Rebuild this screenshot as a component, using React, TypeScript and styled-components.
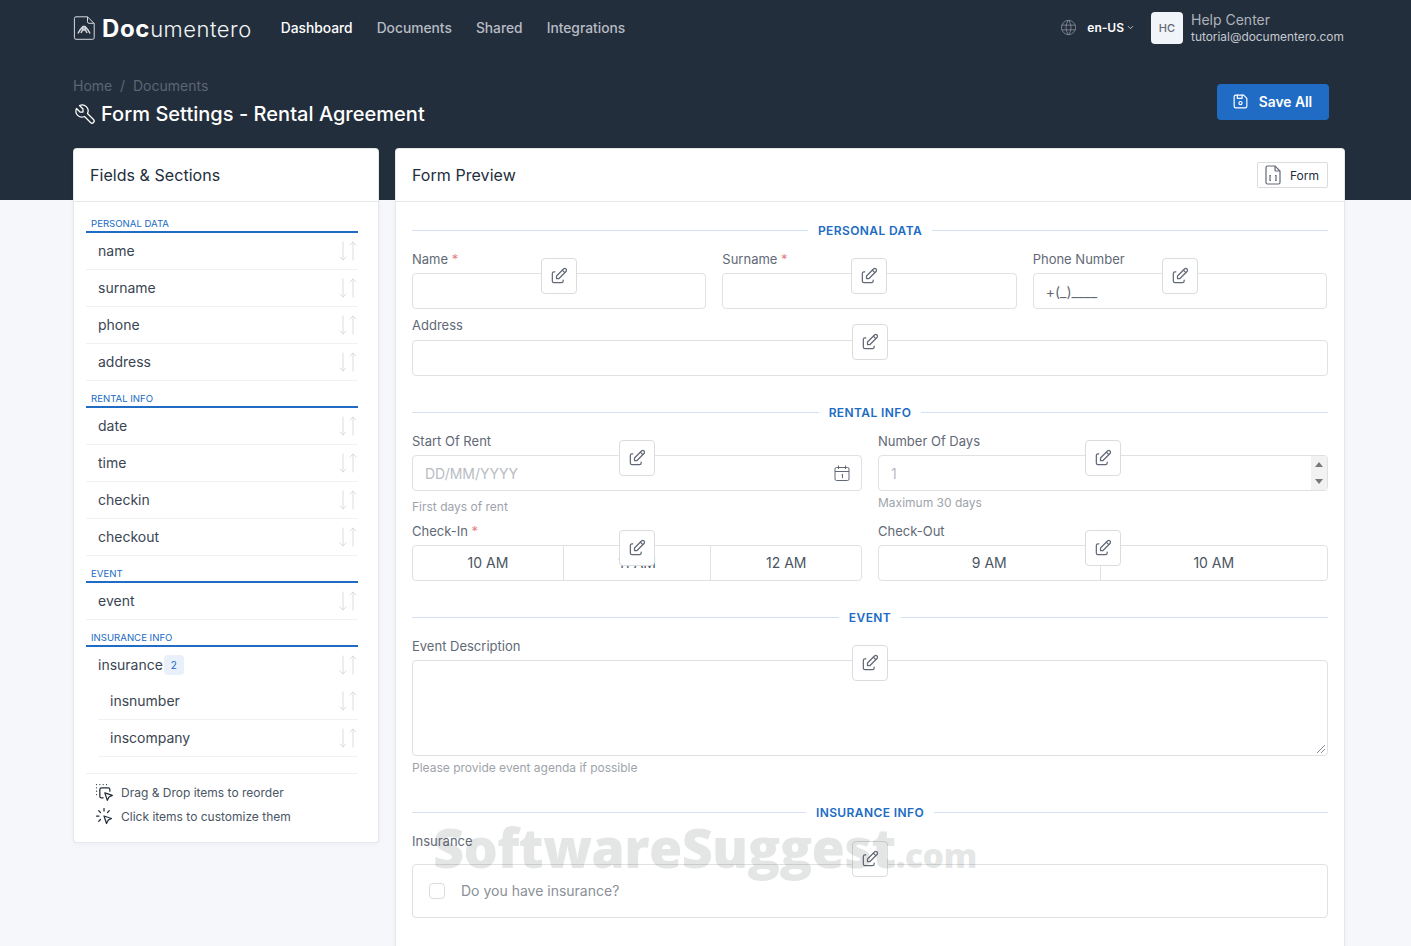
import styled, { createGlobalStyle } from "styled-components";
import {
  TbArrowsDownUp,
  TbChevronDown,
  TbClick,
  TbDeviceFloppy,
  TbDragDrop,
  TbEdit,
  TbTool,
  TbWorld,
} from "react-icons/tb";

const GlobalStyle = createGlobalStyle`
  html, body {
    margin: 0;
    height: 946px;
    overflow: hidden;
  }
  * {
    box-sizing: border-box;
  }
  body {
    font-family: Inter, "Liberation Sans", sans-serif;
    font-size: 14px;
    color: #232e3c;
  }
`;

const sections = [
  { title: "PERSONAL DATA", items: ["name", "surname", "phone", "address"] },
  { title: "RENTAL INFO", items: ["date", "time", "checkin", "checkout"] },
  { title: "EVENT", items: ["event"] },
];

const LogoIcon = () => (
  <svg width="22" height="24" viewBox="0 0 22 24" fill="none" stroke="#d5d9de" strokeWidth="1">
    <path d="M3 .8h11.5l6.7 6.7v14.2a1.6 1.6 0 0 1-1.6 1.6H3a1.6 1.6 0 0 1-1.6-1.6V2.400A1.6 1.600 0 0 1 3 .8z" />
    <path d="M14.500 .8v5a1.500 1.500 0 0 0 1.500 1.500h5" />
    <path d="M5 17.500l2-3.500 3-3.500h2l3 3.500 2 3.500M8 17l1.500-3h3l1.500 3M10 11v3M12 11v3" strokeWidth="1.500" />
  </svg>
);

const DateIcon = () => (
  <svg width="18" height="18" viewBox="0 0 18 18" fill="none" stroke="#626976" strokeWidth="1">
    <rect x="2" y="3.500" width="14" height="13" rx="1.500" />
    <path d="M5.500 1.500v3.500M12.500 1.500v3.500M2 7.500h14M8.500 11l1-.8v4" />
  </svg>
);

const FormFileIcon = () => (
  <svg width="16" height="20" viewBox="0 0 16 20" fill="none" stroke="#626976" strokeWidth="1.200">
    <path d="M2.500 1h7.500l5 5v11.500a1.500 1.500 0 0 1-1.500 1.500h-11a1.500 1.500 0 0 1-1.500-1.500v-15a1.500 1.500 0 0 1 1.500-1.500z" />
    <path d="M10 1v4a1 1 0 0 0 1 1h4" />
    <path d="M6 10.500h-1v5h1M10 10.500h1v5h-1" />
  </svg>
);

const Field = ({
  label,
  required,
  editTop = 9,
  children,
}: {
  label: string;
  required?: boolean;
  editTop?: number;
  children: React.ReactNode;
}) => (
  <FieldBox>
    <Label>
      {label}
      {required && <Star> *</Star>}
    </Label>
    {children}
    <EditBox $top={editTop}>
      <TbEdit size={20} strokeWidth={1.5} />
    </EditBox>
  </FieldBox>
);

const Row = ({ name, nested }: { name: string; nested?: boolean }) => (
  <ListRow $nested={nested}>
    {name}
    <SortIcon>
      <TbArrowsDownUp size={24} strokeWidth={1} />
    </SortIcon>
  </ListRow>
);

const Divider = ({ children }: { children: string }) => (
  <DividerRow>
    <span>{children}</span>
  </DividerRow>
);

export default function App() {
  return (
    <Page>
      <GlobalStyle />
      <Container>
        <TopBar>
          <Logo>
            <LogoIcon />
            <LogoText>
              <b>Doc</b>umentero
            </LogoText>
          </Logo>
          <Nav>
            <NavLink $active>Dashboard</NavLink>
            <NavLink>Documents</NavLink>
            <NavLink>Shared</NavLink>
            <NavLink>Integrations</NavLink>
          </Nav>
          <Lang>
            <TbWorld size={19} strokeWidth={1} color="#8a919b" />
            <LangText>en-US</LangText>
            <TbChevronDown size={9} color="#e6e8eb" />
          </Lang>
          <Avatar>HC</Avatar>
          <UserInfo>
            <UserName>Help Center</UserName>
            <UserMail>tutorial@documentero.com</UserMail>
          </UserInfo>
        </TopBar>

        <TitleRow>
          <div>
            <Crumbs>Home&nbsp; /&nbsp; Documents</Crumbs>
            <Title>
              <TbTool size={24} strokeWidth={1.25} />
              Form Settings - Rental Agreement
            </Title>
          </div>
          <SaveButton>
            <TbDeviceFloppy size={19} strokeWidth={1.5} />
            Save All
          </SaveButton>
        </TitleRow>

        <Columns>
          <Card>
            <CardHeader>
              <CardTitle>Fields &amp; Sections</CardTitle>
            </CardHeader>
            <ListBody>
              {sections.map((s) => (
                <div key={s.title}>
                  <ListSection>{s.title}</ListSection>
                  {s.items.map((i) => (
                    <Row key={i} name={i} />
                  ))}
                </div>
              ))}
              <ListSection>INSURANCE INFO</ListSection>
              <ListRow $plain>
                <span>insurance</span>
                <Badge>2</Badge>
                <SortIcon>
                  <TbArrowsDownUp size={24} strokeWidth={1} />
                </SortIcon>
              </ListRow>
              <Row name="insnumber" nested />
              <Row name="inscompany" nested />
              <Tips>
                <Tip>
                  <TbDragDrop size={20} strokeWidth={1.5} />
                  Drag &amp; Drop items to reorder
                </Tip>
                <Tip>
                  <TbClick size={20} strokeWidth={1.5} />
                  Click items to customize them
                </Tip>
              </Tips>
            </ListBody>
          </Card>

          <Card>
            <CardHeader>
              <CardTitle>Form Preview</CardTitle>
              <FormButton>
                <FormFileIcon />
                Form
              </FormButton>
            </CardHeader>
            <PreviewBody>
              <Divider>PERSONAL DATA</Divider>
              <Grid $cols={3}>
                <Field label="Name" required>
                  <Input />
                </Field>
                <Field label="Surname" required>
                  <Input />
                </Field>
                <Field label="Phone Number">
                  <Input>
                    <PhoneMask>+(_)____</PhoneMask>
                  </Input>
                </Field>
              </Grid>
              <Grid $cols={1}>
                <Field label="Address">
                  <Input $top={5} />
                </Field>
              </Grid>

              <Divider>RENTAL INFO</Divider>
              <Grid $cols={2}>
                <Field label="Start Of Rent">
                  <Input>
                    <Placeholder>DD/MM/YYYY</Placeholder>
                    <DateIcon />
                  </Input>
                  <Hint $top={8}>First days of rent</Hint>
                </Field>
                <Field label="Number Of Days">
                  <Input>
                    <Placeholder>1</Placeholder>
                    <Spinner>
                      <SpinUp />
                      <SpinDown />
                    </Spinner>
                  </Input>
                  <Hint $top={4}>Maximum 30 days</Hint>
                </Field>
                <Field label="Check-In" required>
                  <Segments>
                    <Segment>10 AM</Segment>
                    <Segment>11 AM</Segment>
                    <Segment>12 AM</Segment>
                  </Segments>
                </Field>
                <Field label="Check-Out">
                  <Segments>
                    <Segment>9 AM</Segment>
                    <Segment>10 AM</Segment>
                  </Segments>
                </Field>
              </Grid>

              <Divider>EVENT</Divider>
              <Grid $cols={1}>
                <Field label="Event Description">
                  <TextArea>
                    <ResizeGrip width="10" height="10" viewBox="0 0 10 10" stroke="#8a8f96">
                      <path d="M1 9L9 1M5 9l4-4" />
                    </ResizeGrip>
                  </TextArea>
                  <Hint $top={4}>Please provide event agenda if possible</Hint>
                </Field>
              </Grid>

              <Divider>INSURANCE INFO</Divider>
              <Grid $cols={1}>
                <Field label="Insurance" editTop={10}>
                  <CheckBoxPanel>
                    <CheckMark />
                    Do you have insurance?
                  </CheckBoxPanel>
                </Field>
              </Grid>
            </PreviewBody>
          </Card>
        </Columns>
      </Container>
      <Watermark>
        SoftwareSuggest<small>.com</small>
      </Watermark>
    </Page>
  );
}

const Page = styled.div`
  position: relative;
  height: 946px;
  overflow: hidden;
  background: linear-gradient(#232e3c 200px, #f5f7fb 200px);
`;

const Container = styled.div`
  width: 1272px;
  margin-left: 73px;
`;

const TopBar = styled.header`
  display: flex;
  align-items: center;
  height: 56px;
`;

const Logo = styled.div`
  display: flex;
  align-items: center;
  gap: 7px;
`;

const LogoText = styled.span`
  font-size: 22px;
  font-weight: 300;
  letter-spacing: 0.5px;
  color: #f2f4f6;
  b {
    font-size: 24px;
    font-weight: 700;
    letter-spacing: 0.65px;
    color: #fff;
  }
`;

const Nav = styled.nav`
  display: flex;
  gap: 24px;
  margin-left: 29px;
  margin-right: auto;
  padding-bottom: 1px;
`;

const NavLink = styled.a<{ $active?: boolean }>`
  font-size: 13.800px;
  font-weight: 500;
  color: ${(p) => (p.$active ? "#ffffff" : "#b7bcc4")};
`;

const Lang = styled.div`
  display: flex;
  align-items: center;
  padding-bottom: 1px;
  color: #fff;
`;

const LangText = styled.span`
  margin: 0 2px 0 9px;
  font-size: 12px;
  font-weight: 600;
`;

const Avatar = styled.div`
  display: flex;
  align-items: center;
  justify-content: center;
  width: 32px;
  height: 32px;
  margin-left: 16px;
  border-radius: 4px;
  background: #f1f5f9;
  color: #626976;
  font-size: 11px;
  font-weight: 500;
`;

const UserInfo = styled.div`
  width: 154px;
  margin-left: 8px;
`;

const UserName = styled.div`
  font-size: 14px;
  line-height: 16px;
  color: #aeb3bb;
`;

const UserMail = styled.div`
  font-size: 11.900px;
  line-height: 17px;
  color: #c4c9d0;
`;

const TitleRow = styled.div`
  display: flex;
  align-items: flex-start;
  justify-content: space-between;
  height: 92px;
  padding-top: 20px;
  padding-right: 16px;
`;

const Crumbs = styled.div`
  font-size: 14px;
  line-height: 20px;
  color: #5c6673;
`;

const Title = styled.h1`
  display: flex;
  align-items: center;
  gap: 4px;
  margin: 4px 0 0;
  font-size: 20px;
  font-weight: 500;
  line-height: 28px;
  letter-spacing: 0.03px;
  color: #fff;
`;

const SaveButton = styled.button`
  display: flex;
  align-items: center;
  justify-content: center;
  gap: 9px;
  width: 112px;
  height: 36px;
  margin-top: 8px;
  padding: 0 3px 1px 0;
  border: 0;
  border-radius: 4px;
  background: #206bc4;
  color: #fff;
  font: 600 13.800px Inter, sans-serif;
`;

const Columns = styled.div`
  display: grid;
  grid-template-columns: 306px 950px;
  gap: 16px;
  align-items: start;
`;

const Card = styled.section`
  border: 1px solid rgba(98, 105, 118, 0.16);
  border-radius: 4px;
  background: #fff;
  box-shadow: 0 2px 4px rgba(35, 46, 60, 0.04);
`;

const CardHeader = styled.div`
  display: flex;
  align-items: center;
  justify-content: space-between;
  height: 53px;
  padding: 0 16px;
  border-bottom: 1px solid #e6e7e9;
`;

const CardTitle = styled.h3`
  margin: 0;
  font-size: 16px;
  font-weight: 400;
  letter-spacing: 0.05px;
`;

const FormButton = styled.button`
  display: flex;
  align-items: center;
  gap: 9px;
  width: 71px;
  height: 26px;
  padding: 0 7px;
  border: 1px solid #dadcde;
  border-radius: 2px;
  background: #fff;
  color: #232e3c;
  font: 400 12px Inter, sans-serif;
`;

const ListBody = styled.div`
  padding: 4px 20px 16px 12px;
`;

const ListSection = styled.div`
  padding: 11px 0 0 5px;
  height: 27px;
  border-bottom: 2px solid #206bc4;
  font-size: 9.600px;
  line-height: 13px;
  color: #206bc4;
`;

const ListRow = styled.div<{ $nested?: boolean; $plain?: boolean }>`
  display: flex;
  align-items: center;
  height: ${(p) => (p.$plain ? "36px" : "37px")};
  margin-left: ${(p) => (p.$nested ? "12px" : "0")};
  padding: 0 0 1px 12px;
  border-bottom: ${(p) => (p.$plain ? "0" : "1px solid #f0f1f2")};
  color: #3a4553;
`;

const SortIcon = styled.span`
  display: flex;
  margin-left: auto;
  margin-right: -2px;
  color: #dadcde;
`;

const Badge = styled.span`
  display: flex;
  align-items: center;
  justify-content: center;
  width: 20px;
  height: 20px;
  margin-left: 1px;
  border-radius: 4px;
  background: #e9f0f9;
  color: #206bc4;
  font-size: 10px;
`;

const Tips = styled.div`
  display: flex;
  flex-direction: column;
  gap: 4px;
  margin-top: 16px;
  padding-top: 8px;
  border-top: 1px solid #f0f1f2;
`;

const Tip = styled.div`
  display: flex;
  align-items: center;
  gap: 7px;
  height: 20px;
  padding-left: 8px;
  font-size: 12px;
  color: #4b5563;
  svg {
    color: #232e3c;
  }
`;

const PreviewBody = styled.div`
  padding: 20px 16px 80px;
`;

const DividerRow = styled.div`
  display: flex;
  align-items: center;
  gap: 10px;
  height: 16px;
  margin: 28px 0 11px;
  font-size: 12px;
  font-weight: 600;
  letter-spacing: 0.4px;
  color: #206bc4;
  &:first-child {
    margin-top: 0;
  }
  &::before,
  &::after {
    content: "";
    flex: 1;
    height: 1px;
    background: #d2e1f3;
  }
`;

const Grid = styled.div<{ $cols: number }>`
  display: grid;
  grid-template-columns: repeat(${(p) => p.$cols}, 1fr);
  gap: 6px 16px;
  margin-right: ${(p) => (p.$cols === 3 ? "1px" : "0")};
  & + & {
    margin-top: 6px;
  }
`;

const FieldBox = styled.div`
  position: relative;
`;

const Label = styled.div`
  height: 20px;
  margin-bottom: 4px;
  font-size: 13px;
  line-height: 20px;
  color: #626976;
`;

const Star = styled.span`
  color: #e57f7f;
`;

const EditBox = styled.div<{ $top: number }>`
  position: absolute;
  top: ${(p) => p.$top}px;
  left: 50%;
  display: flex;
  align-items: center;
  justify-content: center;
  width: 36px;
  height: 36px;
  margin-left: -18px;
  border: 1px solid #dadcde;
  border-radius: 4px;
  background: #fff;
  color: #626976;
`;

const Input = styled.div<{ $top?: number }>`
  position: relative;
  display: flex;
  align-items: center;
  justify-content: space-between;
  height: 36px;
  margin-top: ${(p) => p.$top ?? 0}px;
  padding: 0 10px 0 12px;
  border: 1px solid #dfe1e4;
  border-radius: 4px;
  overflow: hidden;
`;

const Placeholder = styled.span`
  color: #b8bcc3;
`;

const PhoneMask = styled.span`
  font-size: 14px;
  color: #626976;
`;

const Spinner = styled.span`
  position: absolute;
  top: 0;
  right: 0;
  bottom: 0;
  display: flex;
  flex-direction: column;
  align-items: center;
  justify-content: space-between;
  width: 16px;
  padding: 6px 0;
  background: #f2f2f3;
`;

const SpinUp = styled.i`
  border: 4px solid transparent;
  border-top: 0;
  border-bottom: 5px solid #77797c;
`;

const SpinDown = styled.i`
  border: 4px solid transparent;
  border-bottom: 0;
  border-top: 5px solid #77797c;
`;

const Hint = styled.div<{ $top: number }>`
  margin-top: ${(p) => p.$top}px;
  font-size: 12px;
  line-height: 16px;
  color: #9ea3ab;
`;

const Segments = styled.div`
  display: flex;
  height: 36px;
  border: 1px solid #dfe1e4;
  border-radius: 4px;
`;

const Segment = styled.div`
  display: flex;
  flex: 1 1 auto;
  align-items: center;
  justify-content: center;
  padding-bottom: 1px;
  color: #4b5563;
  & + & {
    border-left: 1px solid #dfe1e4;
  }
`;

const TextArea = styled.div`
  position: relative;
  height: 96px;
  border: 1px solid #dfe1e4;
  border-radius: 4px;
`;

const ResizeGrip = styled.svg`
  position: absolute;
  right: 1px;
  bottom: 1px;
`;

const CheckBoxPanel = styled.div`
  display: flex;
  align-items: center;
  gap: 16px;
  height: 54px;
  margin-top: 13px;
  padding: 0 0 1px 16px;
  border: 1px solid #dfe1e4;
  border-radius: 4px;
  color: #8b9098;
`;

const CheckMark = styled.span`
  width: 16px;
  height: 16px;
  border: 1px solid #dadcde;
  border-radius: 4px;
`;

const Watermark = styled.div`
  position: absolute;
  top: 809px;
  left: 433px;
  font-family: "Open Sans", sans-serif;
  font-size: 54px;
  font-weight: 800;
  line-height: 76px;
  letter-spacing: -0.7px;
  color: rgba(90, 95, 95, 0.16);
  white-space: nowrap;
  pointer-events: none;
  small {
    font-size: 34px;
  }
`;
